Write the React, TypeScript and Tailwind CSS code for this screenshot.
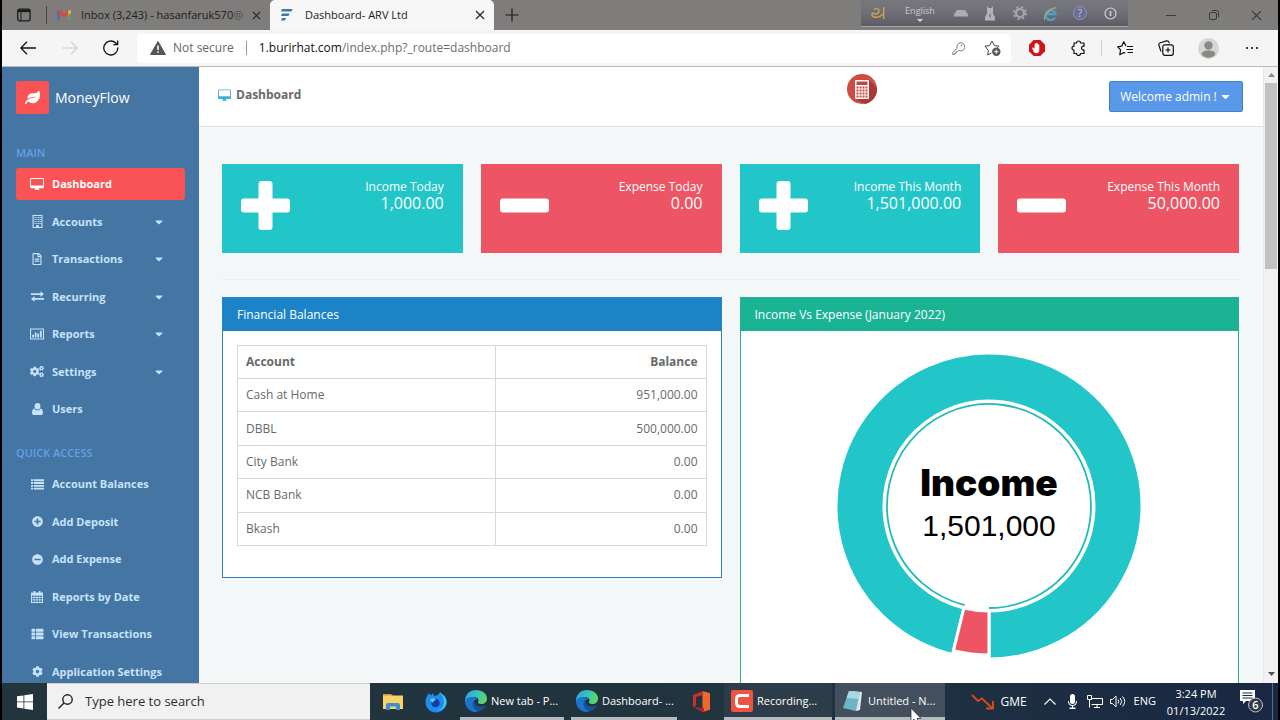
import React from "react";
import {
  FaCaretDown,
  FaCog,
  FaCogs,
  FaLeaf,
  FaMinusCircle,
  FaPlusCircle,
  FaRegFileAlt,
  FaThList,
} from "react-icons/fa";

/* ---------- Sidebar icons ---------- */

function DesktopIcon({ className }: { className: string }) {
  return (
    <svg className={className} viewBox="0 0 1920 1792" fill="currentColor" aria-hidden="true">
      <path d="M1792 992v-832q0-13-9.5-22.5t-22.5-9.5h-1600q-13 0-22.5 9.5t-9.5 22.5v832q0 13 9.5 22.5t22.5 9.5h1600q13 0 22.5-9.5t9.5-22.5zm128-832v1088q0 66-47 113t-113 47h-544q0 37 16 77.5t32 71 16 43.5q0 26-19 45t-45 19h-512q-26 0-45-19t-19-45q0-14 16-44t32-70 16-78h-544q-66 0-113-47t-47-113v-1088q0-66 47-113t113-47h1600q66 0 113 47t47 113z" />
    </svg>
  );
}

function BuildingIcon() {
  return (
    <svg className="h-[13px] w-[11px]" viewBox="0 0 11 13" fill="currentColor" aria-hidden="true">
      <path fillRule="evenodd" d="M.5 0h10v13H.5zM1.600 1v11h2.600v-2h2.600v2h2.600V1z" />
      {[2, 4, 6, 8].map((y) => (
        <path key={y} d={`M2.500 ${y}h1.200v1.100H2.500zM4.400 ${y}h1v1.100h-1zM6 ${y}h1v1.100H6zM7.500 ${y}h1.200v1.100H7.500z`} />
      ))}
    </svg>
  );
}

function ExchangeIcon() {
  return (
    <svg className="h-[11px] w-[13px]" viewBox="0 0 13 11" fill="currentColor" aria-hidden="true">
      <path d="M0 2.200h9.500V.2L13 3.100 9.500 6V4H0zM13 7H3.500V5L0 7.900l3.500 2.900V8.800H13z" />
    </svg>
  );
}

function ChartIcon() {
  return (
    <svg className="h-[12px] w-[14px]" viewBox="0 0 14 12" fill="currentColor" aria-hidden="true">
      <path fillRule="evenodd" d="M0 .5h14v11H0zM1.100 1.600v8.800h11.800V1.600z" />
      <path d="M2.200 6.800H4v2.700H2.200zM4.800 4.500h1.700v5H4.800zM7.300 5.600H9v3.900H7.300zM9.900 2.700h1.800v6.800H9.900z" />
    </svg>
  );
}

function UserIcon() {
  return (
    <svg className="h-[12px] w-[11px]" viewBox="0 0 11 12" fill="currentColor" aria-hidden="true">
      <ellipse cx="5.500" cy="3.300" rx="2.900" ry="3.300" />
      <path d="M2.300 5.400c.8 1.300 1.900 1.900 3.200 1.900s2.400-.6 3.200-1.900C10.300 5.900 11 7.700 11 9.700c0 1.500-.9 2.300-2.200 2.300H2.200C.9 12 0 11.200 0 9.700c0-2 .7-3.800 2.300-4.300z" />
    </svg>
  );
}

function ListIcon() {
  return (
    <svg className="h-[11px] w-[13px]" viewBox="0 0 13 11" fill="currentColor" aria-hidden="true">
      {[0.3, 3.1, 5.9, 8.7].map((y) => (
        <path key={y} d={`M0 ${y}h2v1.900H0zM2.700 ${y}H13v1.900H2.700z`} />
      ))}
    </svg>
  );
}

function CalendarIcon() {
  return (
    <svg className="h-[12px] w-[12px]" viewBox="0 0 12 12" fill="currentColor" aria-hidden="true">
      <path d="M2.500 0h1.600v2.600H2.500zM7.900 0h1.600v2.600H7.900z" />
      <path
        fillRule="evenodd"
        d="M0 1.500h12V12H0zM1 4.600v1.600h1.800V4.600zM3.500 4.600v1.600h2.100V4.600zM6.400 4.600v1.600h2.100V4.600zM9.200 4.600v1.600H11V4.600zM1 6.900v1.700h1.800V6.900zM3.500 6.900v1.700h2.100V6.900zM6.400 6.900v1.700h2.100V6.900zM9.200 6.900v1.700H11V6.900zM1 9.300v1.700h1.800V9.300zM3.500 9.300v1.700h2.100V9.300zM6.400 9.300v1.700h2.100V9.300zM9.200 9.300v1.700H11V9.300z"
      />
    </svg>
  );
}

/* ---------- Sidebar ---------- */

type NavItem = { label: string; icon: React.ReactNode; caret?: boolean; active?: boolean };

const mainItems: NavItem[] = [
  { label: "Dashboard", icon: <DesktopIcon className="h-[13px] w-[14px]" />, active: true },
  { label: "Accounts", icon: <BuildingIcon />, caret: true },
  { label: "Transactions", icon: <FaRegFileAlt className="h-[12px] w-[10px]" />, caret: true },
  { label: "Recurring", icon: <ExchangeIcon />, caret: true },
  { label: "Reports", icon: <ChartIcon />, caret: true },
  { label: "Settings", icon: <FaCogs className="h-[13px] w-[14px]" />, caret: true },
  { label: "Users", icon: <UserIcon /> },
];

const quickItems: NavItem[] = [
  { label: "Account Balances", icon: <ListIcon /> },
  { label: "Add Deposit", icon: <FaPlusCircle className="size-[11px]" /> },
  { label: "Add Expense", icon: <FaMinusCircle className="size-[11px]" /> },
  { label: "Reports by Date", icon: <CalendarIcon /> },
  { label: "View Transactions", icon: <FaThList className="h-[12px] w-[13px]" /> },
  { label: "Application Settings", icon: <FaCog className="size-[11px]" /> },
];

function NavLink({ item }: { item: NavItem }) {
  return (
    <li>
      <a
        href="#"
        className={
          item.active
            ? "flex h-8 items-center rounded-[3px] bg-[#fa5355] pr-5 pl-[13px] text-white"
            : "flex h-8 items-center rounded-[3px] pr-5 pl-[13px] text-[#c7e3fb]"
        }
      >
        <span className="flex w-4 shrink-0 justify-center">{item.icon}</span>
        <span className="ml-[7px] text-[11px] leading-4 font-bold whitespace-nowrap">{item.label}</span>
        {item.caret && <FaCaretDown className="ml-auto size-3" />}
      </a>
    </li>
  );
}

function Sidebar() {
  return (
    <aside className="w-[197px] shrink-0 overflow-hidden bg-[#4475a3] px-[14px]">
      <a href="#" className="mt-[14px] flex items-center gap-[6px] text-white">
        <span className="flex size-[33px] items-center justify-center rounded-[2px] bg-[#fa5355]">
          <FaLeaf className="size-[15px]" />
        </span>
        <span className="text-[14px] leading-5">MoneyFlow</span>
      </a>
      <h2 className="mt-[31px] text-[11px] leading-4 font-semibold text-[#649fe8]">MAIN</h2>
      <ul className="mt-[7px] flex h-[257px] flex-col justify-between">
        {mainItems.map((item) => (
          <NavLink key={item.label} item={item} />
        ))}
      </ul>
      <h2 className="mt-5 text-[11px] leading-4 font-semibold text-[#649fe8]">QUICK ACCESS</h2>
      <ul className="mt-[7px] flex h-[220px] flex-col justify-between">
        {quickItems.map((item) => (
          <NavLink key={item.label} item={item} />
        ))}
      </ul>
    </aside>
  );
}

/* ---------- Browser chrome ---------- */

function CloseX({ className }: { className: string }) {
  return (
    <svg className={className} viewBox="0 0 10 10" fill="none" stroke="currentColor" strokeWidth="1.200" aria-hidden="true">
      <path d="M1 1l8 8M9 1L1 9" />
    </svg>
  );
}

function BanglaToolbar() {
  return (
    <div className="flex h-[27px] w-[267px] items-center self-start border-b border-[#a3a3a8] bg-linear-to-b from-[#77777c] via-[#6f6f77] to-[#5c5c66] text-[#c9c9cd]">
      <button aria-label="Bangla" className="flex w-[33px] justify-center">
        <svg className="h-[14px] w-[14px]" viewBox="0 0 14 14" fill="none" stroke="#c9a04e" strokeWidth="1.500">
          <path d="M3 3.500c2-1.800 5-1 5 1.300C8 7.500 5 8.500 3 7.500c-1.500-1-2.500 0-2 1.500 1 3 7 3.500 11-1M12.700 1v12" />
        </svg>
      </button>
      <button className="flex w-[52px] flex-col items-center text-[9px] leading-3">
        English
        <svg className="mt-[2px] h-[3px] w-[6px]" viewBox="0 0 6 3" fill="#d8d8dc" aria-hidden="true">
          <path d="M0 0h6L3 3z" />
        </svg>
      </button>
      <button aria-label="Keyboard" className="flex w-[29px] justify-center">
        <svg className="h-[8px] w-[14px]" viewBox="0 0 14 8" fill="#adadb1">
          <path d="M3 1h8l3 4.500v2H0v-2z" />
        </svg>
      </button>
      <button aria-label="Mouse" className="flex w-[30px] justify-center">
        <svg className="h-[15px] w-[12px]" viewBox="0 0 12 15" fill="#b3b3b7">
          <path d="M3 0l1.500 2h3L9 0v5.500Q8.500 7 9.500 8.500L11 11v3.500H1V11l1.500-2.500Q3.500 7 3 5.500z" />
          <path d="M6 7l1 3-1 2-1-2z" fill="#77777c" />
        </svg>
      </button>
      <button aria-label="Options" className="flex w-[30px] justify-center">
        <svg className="size-[14px]" viewBox="0 0 14 14" fill="none" stroke="#a9a9ad">
          <circle cx="7" cy="7" r="4" strokeWidth="2.200" />
          <circle cx="7" cy="7" r="6" strokeWidth="1.800" strokeDasharray="2.360 2.360" />
        </svg>
      </button>
      <button aria-label="Web" className="flex w-[30px] justify-center">
        <svg className="size-[15px]" viewBox="0 0 15 15" fill="none">
          <path d="M12 11.500A5 5 0 1 1 12.500 8H4" stroke="#4f9fc4" strokeWidth="2.300" />
          <path d="M2 13.500C-1 12 7 1 13.500 2" stroke="#b9a760" strokeWidth="1.200" />
        </svg>
      </button>
      <button aria-label="Help" className="flex w-[30px] justify-center">
        <span className="flex size-[14px] items-center justify-center rounded-full border border-[#9292bb] bg-[#6d6d98] text-[10px] leading-none">?</span>
      </button>
      <button aria-label="Power" className="flex w-[30px] justify-center">
        <svg className="size-[13px]" viewBox="0 0 13 13" fill="none" stroke="#d3d3d6">
          <circle cx="6.500" cy="6.500" r="5.500" strokeWidth="1.200" />
          <path d="M6.500 4v5" strokeWidth="1.600" />
        </svg>
      </button>
    </div>
  );
}

function TabStrip() {
  return (
    <div className="flex h-[30px] shrink-0 items-stretch bg-[#7f7d7b] text-[11px] text-[#202020]">
      <button aria-label="Tab actions" className="flex w-[44px] items-center justify-center">
        <svg className="size-[14px]" viewBox="0 0 14 14" fill="none" stroke="#1c1c1c" aria-hidden="true">
          <rect x=".7" y="1.200" width="12.400" height="11.600" rx="2" strokeWidth="1.300" />
          <path d="M1 2.800h12" strokeWidth="2.600" />
          <path d="M4 4v8.500" strokeWidth="1" />
        </svg>
      </button>
      <div className="my-[6px] w-px bg-[#454443]" />
      <div className="flex w-[223px] items-center pr-[9px] pl-[9px]">
        <svg className="h-[12px] w-4 shrink-0" viewBox="0 0 16 12" aria-hidden="true">
          <path d="M1 1v4l7 5 7-5V1l-2-.5-5 4-5-4z" fill="#d9493f" />
          <path d="M1 2v9h3V5z" fill="#4f6fae" />
          <path d="M15 2v9h-3V5z" fill="#6a9a62" />
          <path d="M12 1.500L15 1v3l-3 2z" fill="#d9b33a" />
          <path d="M4 5.500l4 3 4-3V12H4z" fill="#7f7d7b" />
        </svg>
        <span className="ml-[9px] whitespace-nowrap">
          Inbox (3,243) - hasanfaruk570<span className="text-[#4f4e4d]">@</span>
        </span>
        <button aria-label="Close Inbox tab" className="ml-auto">
          <CloseX className="size-[9px]" />
        </button>
      </div>
      <div className="flex w-[224px] items-center rounded-t-[5px] bg-[#f7f7f7] pr-[9px] pl-[11px]">
        <svg className="h-[12px] w-[12px]" viewBox="0 0 12 12" fill="#3f78a8" aria-hidden="true">
          <path d="M1 0h10.500l-1 2.600H0zM1 4.600h7.500L7.500 7H0zM1 9h4l-1 2.500H0z" />
        </svg>
        <span className="ml-3">Dashboard- ARV Ltd</span>
        <button aria-label="Close Dashboard tab" className="ml-auto">
          <CloseX className="size-[10px]" />
        </button>
      </div>
      <button aria-label="New tab" className="flex w-[36px] items-center justify-center">
        <svg className="size-[14px]" viewBox="0 0 14 14" stroke="#1c1c1c" strokeWidth="1.200">
          <path d="M7 .5v13M.5 7h13" />
        </svg>
      </button>
      <div className="ml-auto flex">
        <BanglaToolbar />
        <div className="ml-[21px] flex items-center text-[#3c3b3b]">
          <button aria-label="Minimize" className="flex w-[43px] justify-center">
            <svg className="size-[10px]" viewBox="0 0 10 10" stroke="currentColor">
              <path d="M0 5.500h10" />
            </svg>
          </button>
          <button aria-label="Restore" className="flex w-[43px] justify-center">
            <svg className="size-[10px]" viewBox="0 0 10 10" fill="none" stroke="currentColor">
              <rect x=".5" y="2.500" width="7" height="7" rx="1.500" />
              <path d="M3 .5h4.500a2 2 0 0 1 2 2V7" />
            </svg>
          </button>
          <button aria-label="Close window" className="flex w-[43px] justify-center">
            <CloseX className="size-[11px]" />
          </button>
        </div>
      </div>
    </div>
  );
}

function AddressBar() {
  return (
    <div className="flex h-[37px] shrink-0 items-center border-b border-[#b9b9b9] bg-[#f5f5f5]">
      <button aria-label="Back" className="ml-[18px]">
        <svg className="h-[14px] w-4" viewBox="0 0 16 14" fill="none" stroke="#111" strokeWidth="1.300">
          <path d="M7 .8L.9 7 7 13.200M1 7h15" />
        </svg>
      </button>
      <button aria-label="Forward" className="ml-[26px]" disabled>
        <svg className="h-[14px] w-4" viewBox="0 0 16 14" fill="none" stroke="#cdcdcd" strokeWidth="1.200">
          <path d="M9 .8L15.100 7 9 13.200M15 7H0" />
        </svg>
      </button>
      <button aria-label="Refresh" className="ml-[25px]">
        <svg className="size-4" viewBox="0 0 16 16" fill="none" stroke="#111" strokeWidth="1.300">
          <path d="M14.800 7.500a7 7 0 1 1-2.300-4.700l1.700 1.700M14.700.4v4.300h-4.300" />
        </svg>
      </button>
      <div className="ml-[18px] flex h-[29px] flex-1 items-center rounded-[4px] bg-white pr-[10px] pl-[13px]">
        <svg className="h-[14px] w-4" viewBox="0 0 16 14" aria-hidden="true">
          <path d="M8 .5L15.500 13.500H.5z" fill="#555" stroke="#555" strokeLinejoin="round" />
          <path d="M7.200 4.500h1.600V9H7.200zM7.200 10.200h1.600v1.600H7.200z" fill="#fff" />
        </svg>
        <span className="ml-[7px] text-[12px] whitespace-nowrap text-[#666]">Not secure</span>
        <span className="ml-3 h-[14px] w-px bg-[#999]" />
        <span className="ml-3 text-[12px] whitespace-nowrap text-[#6d6d6d]">
          <span className="text-[#111]">1.burirhat.com</span>/index.php?_route=dashboard
        </span>
        <button aria-label="Saved password" className="ml-auto">
          <svg className="size-[13px]" viewBox="0 0 13 13" fill="none" stroke="#777">
            <path d="M5.100 6.200L.7 10.600v1.800h2.200v-1.300h1.300V9.800h1.300l1.400-1.500A4 4 0 1 0 5.100 6.200z" />
            <circle cx="9.500" cy="3.500" r=".8" fill="#777" stroke="none" />
          </svg>
        </button>
        <button aria-label="Add to favorites" className="ml-[19px]">
          <svg className="h-4 w-[17px]" viewBox="0 0 17 16" fill="none" stroke="#444">
            <path d="M7.500 13L3.700 15l.7-4.600L1 6.300l4.600-.8L8 1l2.400 4.500 4.600.8-1.500 1.500" strokeLinejoin="round" />
            <circle cx="12.300" cy="11.700" r="4.200" fill="#555" stroke="none" />
            <path d="M12.300 9.500v4.400M10.100 11.700h4.400" stroke="#fff" />
          </svg>
        </button>
      </div>
      <button aria-label="Ad blocker" className="ml-[18px]">
        <svg className="size-4" viewBox="0 0 16 16">
          <path d="M4.700 0h6.600L16 4.700v6.600L11.300 16H4.700L0 11.300V4.700z" fill="#d6101a" />
          <path d="M4 7.500l1.600 1.300V4.200c0-.9 1.100-.9 1.100 0V3.400c0-.9 1.200-.9 1.200 0v.5c0-.9 1.200-.9 1.200 0v1c0-.9 1.200-.9 1.200 0v5c0 2-1.100 3.300-2.900 3.300-1.400 0-2.200-.6-2.800-1.700L3.200 8.300c-.2-.7.300-1.100.8-.8z" fill="#fff" />
        </svg>
      </button>
      <button aria-label="Extensions" className="ml-[26px]">
        <svg className="size-4" viewBox="0 0 16 16" fill="none" stroke="#111" strokeWidth="1.200" strokeLinejoin="round">
          <path d="M3 3h2.500a2 2 0 0 1 4 0H13v3.300a1.900 1.900 0 1 0 0 3.600V13.500H9.500a2 2 0 0 1-4 0H3v-3.300a2 2 0 0 1 0-4z" />
        </svg>
      </button>
      <span className="ml-[14px] h-4 w-px bg-[#cfcfcf]" />
      <button aria-label="Favorites" className="ml-[15px]">
        <svg className="h-[15px] w-4" viewBox="0 0 16 15" fill="none" stroke="#111" strokeWidth="1.200" strokeLinejoin="round">
          <path d="M9 5L6.800.8 4.700 5.200.6 5.800l3 3-.8 4.900 4-2.200 1.500.8M10 5.500h6M9.500 8.500H16M10.500 11.500H16" />
        </svg>
      </button>
      <button aria-label="Collections" className="ml-[25px]">
        <svg className="size-4" viewBox="0 0 16 16" fill="none" stroke="#111" strokeWidth="1.200">
          <rect x="4.800" y="4.800" width="10.500" height="10.500" rx="2" />
          <path d="M10 7.500v5M7.500 10h5M3 11.500L1 5.500Q.4 3.500 2.300 2.800L8.500.9q1.800-.4 2.500 1.500l.4 1" />
        </svg>
      </button>
      <button aria-label="Profile" className="ml-6">
        <svg className="size-[21px]" viewBox="0 0 21 21">
          <circle cx="10.500" cy="10.500" r="10.500" fill="#d6d6d6" />
          <circle cx="10.500" cy="7.500" r="4.200" fill="#8c8882" />
          <path d="M3.500 16c1-3 3.500-3.500 7-3.500s6 .5 7 3.500c-1.500 2.500-4 3.700-7 3.700s-5.500-1.200-7-3.700z" fill="#8c8882" />
        </svg>
      </button>
      <button aria-label="Settings and more" className="mr-5 ml-[27px] flex gap-[3px]">
        <span className="size-[2px] rounded-full bg-black" />
        <span className="size-[2px] rounded-full bg-black" />
        <span className="size-[2px] rounded-full bg-black" />
      </button>
    </div>
  );
}

/* ---------- Page content ---------- */

function CalculatorBadge() {
  return (
    <button aria-label="Calculator" className="mt-[7px] mr-[232px] ml-auto">
      <svg className="size-[30px]" viewBox="0 0 30 30">
        <circle cx="15" cy="15" r="15" fill="#cf4b43" />
        <path d="M22 6l8 8a15 15 0 0 1-12 16l-10-5z" fill="#a83a36" />
        <rect x="8" y="6" width="14" height="19" rx="1" fill="#fff" />
        <path d="M9.500 7.500h11v3.500h-11z" fill="#c9463f" />
        {[12.5, 15.5, 18.5, 21.5].map((y) => (
          <path key={y} d={`M9.500 ${y}h2v2h-2zM12.500 ${y}h2v2h-2zM15.500 ${y}h2v2h-2zM18.500 ${y}h2v2h-2z`} fill="#c9463f" />
        ))}
      </svg>
    </button>
  );
}

const stats = [
  { label: "Income Today", value: "1,000.00", income: true },
  { label: "Expense Today", value: "0.00", income: false },
  { label: "Income This Month", value: "1,501,000.00", income: true },
  { label: "Expense This Month", value: "50,000.00", income: false },
];

function StatCard({ label, value, income }: { label: string; value: string; income: boolean }) {
  return (
    <div
      className={
        income
          ? "flex h-[89px] items-start justify-between bg-[#23c6c8] px-[19px] text-white"
          : "flex h-[89px] items-start justify-between bg-[#ed5565] px-[19px] text-white"
      }
    >
      <svg className="mt-[17px] size-[49px]" viewBox="0 0 49 49" fill="currentColor" aria-hidden="true">
        <rect y="17.500" width="49" height="14" rx="3" />
        {income && <rect x="17.500" width="14" height="49" rx="3" />}
      </svg>
      <div className="mt-[15px] text-right">
        <div className="text-[12px] leading-[15px]">{label}</div>
        <div className="text-[16px] leading-[18px]">{value}</div>
      </div>
    </div>
  );
}

const balances = [
  ["Cash at Home", "951,000.00"],
  ["DBBL", "500,000.00"],
  ["City Bank", "0.00"],
  ["NCB Bank", "0.00"],
  ["Bkash", "0.00"],
];

const CENTER = 152;
const SLICE = (13.8 * Math.PI) / 180;

function at(radius: number, angle: number) {
  return `${(CENTER - radius * Math.sin(angle)).toFixed(2)} ${(CENTER + radius * Math.cos(angle)).toFixed(2)}`;
}

function DonutChart() {
  const teal = `M${at(153, SLICE)}A153 153 0 1 1 ${at(153, 0)}L${at(105, 0)}A105 105 0 1 0 ${at(105, SLICE)}z`;
  const red = `M${at(149, 0)}A149 149 0 0 1 ${at(149, SLICE)}L${at(105, SLICE)}A105 105 0 0 0 ${at(105, 0)}z`;
  const ring = `M${at(102, SLICE)}A102 102 0 1 1 ${at(102, 0)}`;
  return (
    <svg className="size-[304px]" viewBox="0 0 304 304" role="img" aria-label="Income 1,501,000">
      <path d={ring} fill="none" stroke="#23b9bb" strokeWidth="1.800" />
      <path d={teal} fill="#23c6c8" stroke="#fff" strokeWidth="3" />
      <path d={red} fill="#ed5565" stroke="#fff" strokeWidth="3" />
      <text x="152" y="142" textAnchor="middle" className="fill-black font-[Inter,sans-serif] text-[37px] font-black">
        Income
      </text>
      <text x="152" y="182" textAnchor="middle" className="fill-black font-['Liberation_Sans',sans-serif] text-[30px]">
        1,501,000
      </text>
    </svg>
  );
}

function Content() {
  return (
    <main className="min-w-0 flex-1 overflow-hidden bg-[#f4f7f8] text-[#676a6c]">
      <header className="flex h-[60px] items-start border-b border-[#dcdfe1] bg-white pr-[20px] pl-[19px]">
        <h1 className="mt-[18px] flex items-center gap-[5px] text-[12px] leading-5 font-bold">
          <DesktopIcon className="h-[13px] w-[13px] text-[#3bb5cf]" />
          Dashboard
        </h1>
        <CalculatorBadge />
        <button className="mt-[14px] flex h-[31px] w-[134px] items-center justify-center gap-[2px] rounded-[2px] border border-[#4580bf] bg-[#5a98ea] text-[12px] whitespace-nowrap text-white">
          Welcome admin !
          <FaCaretDown className="size-[13px]" />
        </button>
      </header>
      <div className="pt-[37px] pr-6 pl-[23px]">
        <section className="grid grid-cols-4 gap-x-[18px]">
          {stats.map((s) => (
            <StatCard key={s.label} {...s} />
          ))}
        </section>
        <hr className="mt-[26px] mb-[17px] border-[#e9edf0]" />
        <section className="grid grid-cols-2 items-start gap-x-[18px]">
          <article className="border border-[#2b83b8] bg-white">
            <h2 className="flex h-[33px] items-center bg-[#1c84c6] px-[14px] text-[12px] text-white">Financial Balances</h2>
            <div className="px-[14px] pt-[14px] pb-[31px]">
              <table className="h-[201px] w-full table-fixed border-collapse text-[12px] leading-4">
                <thead>
                  <tr className="h-[33px]">
                    <th className="w-[55%] border border-[#d6d8da] px-2 text-left font-bold">Account</th>
                    <th className="border border-[#d6d8da] px-2 text-right font-bold">Balance</th>
                  </tr>
                </thead>
                <tbody>
                  {balances.map(([name, amount]) => (
                    <tr key={name}>
                      <td className="border border-[#d6d8da] px-2">{name}</td>
                      <td className="border border-[#d6d8da] px-2 text-right">{amount}</td>
                    </tr>
                  ))}
                </tbody>
              </table>
            </div>
          </article>
          <article className="border border-[#2fae95] bg-white">
            <h2 className="flex h-[33px] items-center bg-[#1ab394] px-[14px] text-[12px] text-white">
              Income Vs Expense (January 2022)
            </h2>
            <div className="flex justify-center pt-[23px] pb-10">
              <DonutChart />
            </div>
          </article>
        </section>
      </div>
    </main>
  );
}

function PageScrollbar() {
  return (
    <div className="flex w-[15px] shrink-0 flex-col items-center border-l border-[#e6e8e9] bg-[#f1f1f1]">
      <svg className="my-[6px] h-[4px] w-[7px]" viewBox="0 0 7 4" fill="#8a8a8a" aria-hidden="true">
        <path d="M0 4h7L3.500 0z" />
      </svg>
      <div className="h-[186px] w-3 bg-[#c1c1c1]" />
      <svg className="mt-auto mb-[7px] h-[4px] w-[7px]" viewBox="0 0 7 4" fill="#505050" aria-hidden="true">
        <path d="M0 0h7L3.500 4z" />
      </svg>
    </div>
  );
}

/* ---------- Taskbar ---------- */

function EdgeLogo() {
  return (
    <svg className="size-[22px] shrink-0" viewBox="0 0 22 22" aria-hidden="true">
      <defs>
        <linearGradient id="edgeTop" x1="0" x2="1" y1=".3" y2=".5">
          <stop offset="0" stopColor="#2aa6e0" />
          <stop offset=".5" stopColor="#35c1c4" />
          <stop offset="1" stopColor="#63d957" />
        </linearGradient>
      </defs>
      <path d="M0 10C.5 4 5 0 11 0c6.500 0 11 4 11 8.500 0 3.500-2.500 5.500-5.500 5.500-2.500 0-4-1-3.500-2 1.500-2.500-.5-5-4-5C5 7 2 10 0 13z" fill="url(#edgeTop)" />
      <path d="M0 11c1-3 4.500-4.500 8-4 2 .2 3.500 1 4.500 2-5-.5-6 9 1 12-1 .6-2 .9-3 .9C4.500 22 0 17 0 11z" fill="#1b74cb" />
      <path d="M8.500 10.500C6 15 9 20.500 14 21c3-.8 5.500-2.500 6.700-5 .2-.5-.2-.7-.6-.5-5 2.300-10.600.3-10.600-4z" fill="#155397" />
    </svg>
  );
}

function TaskButton({ icon, label, className }: { icon: React.ReactNode; label: string; className: string }) {
  return (
    <button className={`flex shrink-0 items-center gap-1 overflow-hidden border-b-[3px] border-[#b5bcc0] pt-[2px] text-[11px] whitespace-nowrap text-white ${className}`}>
      {icon}
      {label}
    </button>
  );
}

function Taskbar() {
  return (
    <footer className="relative flex h-[37px] shrink-0 bg-linear-to-r from-[#22353c] via-[#21343f] via-60% to-[#192744] text-white">
      <button aria-label="Start" className="flex w-[45px] shrink-0 items-center justify-center">
        <svg className="size-4" viewBox="0 0 16 16" fill="#fff">
          <path d="M0 2.300l6.500-.9v6.100H0zM7.300 1.300L16 0v7.500H7.300zM0 8.300h6.500v6.200L0 13.600zM7.300 8.300H16V16l-8.700-1.300z" />
        </svg>
      </button>
      <label className="flex w-[323px] shrink-0 items-center gap-3 border-y border-[#cfcfcf] bg-[#f1f1f1] pl-[11px]">
        <svg className="size-[15px] shrink-0" viewBox="0 0 15 15" fill="none" stroke="#222" strokeWidth="1.400">
          <circle cx="9.500" cy="5.500" r="4.700" />
          <path d="M6 9L.5 14.500" />
        </svg>
        <input
          type="text"
          aria-label="Search"
          placeholder="Type here to search"
          className="min-w-0 flex-1 bg-transparent text-[13px] outline-none placeholder:text-[#2e2e2e]"
        />
      </label>
      <button aria-label="File Explorer" className="flex w-[46px] shrink-0 items-center justify-center">
        <svg className="h-[17px] w-5" viewBox="0 0 20 17">
          <path d="M0 1h8l2 2H0z" fill="#d9972d" />
          <path d="M0 2.500h20V16H0z" fill="#f8d36a" />
          <path d="M3 17v-5q0-2 2-2h10q2 0 2 2v5h-4v-3.500H7V17z" fill="#3f8fcd" />
        </svg>
      </button>
      <button aria-label="Firefox" className="flex w-[40px] shrink-0 items-center justify-center">
        <svg className="size-[22px]" viewBox="0 0 22 22">
          <path d="M2 5l2-3 2 2.500L8 2l1 3 4-1 2-3 2 3.500L19 4c2 2.500 3 5 2.500 8.500C20.500 18 16.500 21.500 11 21.500S1 17.500.6 12C.4 9.500 1 7 2 5z" fill="#1c8cf0" />
          <path d="M15 1c.5 3 4 4 4 10s-4 8-8 8c6 1 10-3 10.500-7C22 7 18 4 15 1z" fill="#43c9f5" />
          <circle cx="10.500" cy="12" r="4.300" fill="#1a3e9c" />
          <path d="M5 8.500c2-1.500 4.500-1 6 .5-2 0-2 2-4 2.500z" fill="#5fd1f7" />
        </svg>
      </button>
      <TaskButton icon={<EdgeLogo />} label="New tab - P..." className="ml-1 w-[104px] pl-[5px]" />
      <TaskButton icon={<EdgeLogo />} label="Dashboard- ..." className="ml-[7px] w-[106px] pl-[5px]" />
      <button aria-label="Office" className="flex w-[47px] shrink-0 items-center justify-center">
        <svg className="h-[21px] w-[18px]" viewBox="0 0 18 21">
          <path d="M10.500 0L18 2.200v16.600L10.500 21z" fill="#f2682a" />
          <path d="M11 0L1 4v12l3-1.500V6l7-2z" fill="#c8322a" />
          <path d="M1 16l9.500 5L12 20v-3z" fill="#b02337" />
        </svg>
      </button>
      <TaskButton
        icon={
          <svg className="size-[22px] shrink-0" viewBox="0 0 22 22" aria-hidden="true">
            <rect width="22" height="22" rx="2" fill="#f0533f" />
            <path d="M18 5.500H9Q5.500 5.500 5.500 9v4q0 3.500 3.500 3.500h9" fill="none" stroke="#fff" strokeWidth="3" />
          </svg>
        }
        label="Recording..."
        className="w-[108px] bg-[#2d3c49] pl-[7px]"
      />
      <TaskButton
        icon={
          <svg className="size-[22px] shrink-0" viewBox="0 0 22 22" aria-hidden="true">
            <path d="M7 1l13 1-2 18-4 1z" fill="#dfe8ea" />
            <path d="M7 1l11 1-4 19-13-3z" fill="#6cb5c9" />
            <path d="M7 1l11 1-1.500 7-12-1z" fill="#a8d9e3" />
          </svg>
        }
        label="Untitled - N..."
        className="ml-[3px] w-[110px] bg-[#434f5d] pl-[7px]"
      />
      <div className="ml-auto flex shrink-0 items-center">
        <svg className="h-4 w-[23px]" viewBox="0 0 23 16" fill="none" stroke="#d6461f" strokeWidth="2" aria-hidden="true">
          <path d="M1 1l6 6 4-2.500 10 9.500M22 7v7.500h-7" />
        </svg>
        <span className="ml-[7px] w-[43px] text-[12px]">GME</span>
        <svg className="h-[7px] w-3" viewBox="0 0 12 7" fill="none" stroke="#fff" strokeWidth="1.200" aria-hidden="true">
          <path d="M.5 6.500L6 1l5.500 5.500" />
        </svg>
        <svg className="ml-3 h-[15px] w-[9px]" viewBox="0 0 9 15" fill="#fff" aria-hidden="true">
          <rect x="2" width="5" height="10" rx="2.500" />
          <path d="M0 7h1q0 4 3.500 4T8 7h1q0 4.500-4 5v1.500h2.500V15h-6v-1.500H4V12Q0 11.500 0 7z" />
        </svg>
        <svg className="ml-[10px] h-[13px] w-4" viewBox="0 0 16 13" fill="none" stroke="#fff" aria-hidden="true">
          <path d="M4 3.500h11.500v6H4.500M7 12.500h6M10 10v2M.5.5h4v4h-4zM2.500 5v7.500" />
        </svg>
        <svg className="ml-[7px] h-[13px] w-4" viewBox="0 0 16 13" fill="none" stroke="#fff" aria-hidden="true">
          <path d="M.5 4.500h2L6 1v11L2.500 8.500h-2zM8 4.500q1.500 2 0 4M10.200 3q3 3.500 0 7M12.500 1.500q4.500 5 0 10" />
        </svg>
        <span className="ml-2 text-[11px]">ENG</span>
        <div className="ml-[10px] w-[60px] text-center text-[11px] leading-[17px] whitespace-nowrap">
          <div>3:24 PM</div>
          <div>01/13/2022</div>
        </div>
        <button aria-label="6 notifications" className="mr-2 ml-[14px]">
          <svg className="h-[23px] w-[24px]" viewBox="0 0 24 23">
            <path d="M0 0h15v11H6l-3 3v-3H0z" fill="#fff" />
            <path d="M2.500 3h10M2.500 5.500h10M2.500 8h10" stroke="#1b2942" />
            <circle cx="15.500" cy="15" r="7" fill="#343b45" stroke="#b9bdc2" />
            <text x="15.500" y="19" textAnchor="middle" fill="#fff" className="text-[11px] font-semibold">
              6
            </text>
          </svg>
        </button>
        <span className="mr-[5px] h-[37px] w-px bg-[#5b6a80]" />
      </div>
      <svg className="absolute top-[25px] left-[908px] h-[17px] w-3" viewBox="0 0 12 17" aria-hidden="true">
        <path d="M1 0v14l3-3 3 6h3l-3-6.500h4z" fill="#fff" stroke="#222" strokeWidth=".7" />
      </svg>
    </footer>
  );
}

export default function App() {
  return (
    <div className="flex h-screen flex-col overflow-hidden border-x-2 border-black bg-white font-['Open_Sans','Noto_Sans',sans-serif]">
      <TabStrip />
      <AddressBar />
      <div className="flex min-h-0 flex-1">
        <Sidebar />
        <Content />
        <PageScrollbar />
      </div>
      <Taskbar />
    </div>
  );
}
